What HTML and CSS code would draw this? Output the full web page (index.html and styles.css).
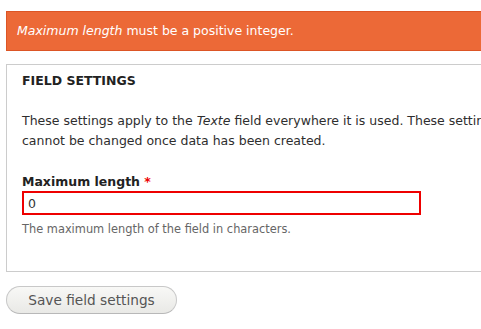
FILE: index.html
```html
<!DOCTYPE html>
<html>
<head>
<meta charset="utf-8">
<link rel="stylesheet" href="styles.css">
</head>
<body>
<div class="page">
  <div class="message-error"><em>Maximum length</em> must be a positive integer.</div>
  <div class="fieldset">
    <div class="legend">Field settings</div>
    <p class="intro">These settings apply to the <em>Texte</em> field everywhere it is used. These settings impact the way that data is stored in the database and cannot be changed once data has been created.</p>
    <div class="form-item">
      <label class="form-label">Maximum length <span class="required">*</span></label>
      <input class="form-text error" type="text" value="0">
      <div class="description">The maximum length of the field in characters.</div>
    </div>
  </div>
  <div class="actions">
    <button class="button" type="button">Save field settings</button>
  </div>
</div>
</body>
</html>
```
FILE: styles.css
```css
html, body {
  margin: 0;
  padding: 0;
  background: #fff;
  overflow: hidden;
}
body {
  font-family: "DejaVu Sans", Verdana, sans-serif;
  font-size: 12.5px;
  color: #333;
}
.page {
  width: 900px;
  padding: 11px 6px 0 6px;
}
.message-error {
  background: #ec6937;
  border: 1px solid #dc5525;
  color: #fff;
  padding: 9px 10px;
  line-height: 20px;
}
.message-error em {
  font-style: italic;
}
.fieldset {
  margin-top: 13px;
  border: 1px solid #ccc;
  padding: 6px 15px 33px 15px;
}
.legend {
  font-weight: bold;
  text-transform: uppercase;
  line-height: 20px;
  color: #222;
}
.intro {
  margin: 20px 0 0 0;
  line-height: 20px;
  max-width: 850px;
  color: #2e2e2e;
}
.form-item {
  margin-top: 21px;
  display: flex;
  flex-direction: column;
  align-items: flex-start;
}
.form-label {
  font-weight: bold;
  line-height: 19px;
  color: #222;
}
.required {
  color: #e00;
}
.form-text {
  box-sizing: border-box;
  width: 399px;
  height: 24px;
  margin: 0;
  padding: 0 4px;
  border: 2px solid #ee0000;
  font-family: "DejaVu Sans", Verdana, sans-serif;
  font-size: 12.5px;
  color: #333;
  background: #fff;
  outline: none;
}
.description {
  margin-top: 5px;
  font-size: 11.4px;
  line-height: 18px;
  color: #666;
}
.actions {
  margin-top: 14px;
}
.button {
  box-sizing: border-box;
  height: 28px;
  width: 171px;
  padding: 0;
  border: 1px solid #c8c8c8;
  border-bottom-color: #b8b8b8;
  border-radius: 14px;
  background: linear-gradient(#f8f8f6, #e9e9e6);
  color: #555;
  font-family: "DejaVu Sans", Tahoma, sans-serif;
  font-size: 13.7px;
  line-height: 26px;
  text-align: center;
  cursor: pointer;
}
```
